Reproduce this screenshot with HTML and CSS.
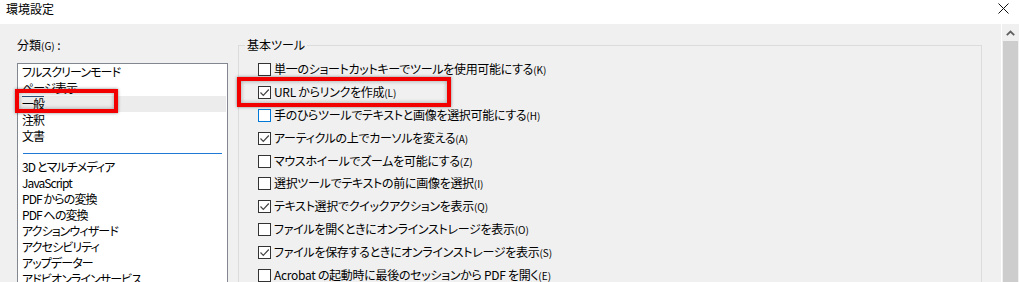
FILE: index.html
```html
<!DOCTYPE html>
<html lang="ja">
<head>
<meta charset="utf-8">
<title>環境設定</title>
<link rel="stylesheet" href="styles.css">
</head>
<body>
<div class="window">
  <div class="titlebar">
    <span class="title">環境設定</span>
    <svg class="close" width="11" height="11" viewBox="0 0 11 11"><path d="M0.5 0.5 L10.5 10.5 M10.5 0.5 L0.5 10.5" stroke="#111" stroke-width="1" fill="none"/></svg>
  </div>
  <div class="body">
    <div class="main">
      <div class="left">
        <div class="cat-label">分類<span class="acc">(G)</span> :</div>
        <div class="listbox">
          <div class="item">フルスクリーンモード</div>
          <div class="item">ページ表示</div>
          <div class="item selected"><span class="focus">一般</span></div>
          <div class="item">注釈</div>
          <div class="item">文書</div>
          <div class="sep"></div>
          <div class="item">3D とマルチメディア</div>
          <div class="item">JavaScript</div>
          <div class="item">PDF からの変換</div>
          <div class="item">PDF への変換</div>
          <div class="item">アクションウィザード</div>
          <div class="item">アクセシビリティ</div>
          <div class="item">アップデーター</div>
          <div class="item">アドビオンラインサービス</div>
        </div>
      </div>
      <div class="right">
        <fieldset class="group">
          <legend>基本ツール</legend>
          <div class="options">
            <div class="opt"><span class="cb"></span><span class="lbl">単一のショートカットキーでツールを使用可能にする<span class="acc">(K)</span></span></div>
            <div class="opt"><span class="cb checked"><svg viewBox="0 0 11 11"><path d="M1.5 5.5 L4.3 8.3 L9.8 2.5" stroke="#444" stroke-width="1.2" fill="none"/></svg></span><span class="lbl">URL からリンクを作成<span class="acc">(L)</span></span></div>
            <div class="opt"><span class="cb hover"></span><span class="lbl">手のひらツールでテキストと画像を選択可能にする<span class="acc">(H)</span></span></div>
            <div class="opt"><span class="cb checked"><svg viewBox="0 0 11 11"><path d="M1.5 5.5 L4.3 8.3 L9.8 2.5" stroke="#444" stroke-width="1.2" fill="none"/></svg></span><span class="lbl">アーティクルの上でカーソルを変える<span class="acc">(A)</span></span></div>
            <div class="opt"><span class="cb"></span><span class="lbl">マウスホイールでズームを可能にする<span class="acc">(Z)</span></span></div>
            <div class="opt"><span class="cb"></span><span class="lbl">選択ツールでテキストの前に画像を選択<span class="acc">(I)</span></span></div>
            <div class="opt"><span class="cb checked"><svg viewBox="0 0 11 11"><path d="M1.5 5.5 L4.3 8.3 L9.8 2.5" stroke="#444" stroke-width="1.2" fill="none"/></svg></span><span class="lbl">テキスト選択でクイックアクションを表示<span class="acc">(Q)</span></span></div>
            <div class="opt"><span class="cb"></span><span class="lbl">ファイルを開くときにオンラインストレージを表示<span class="acc">(O)</span></span></div>
            <div class="opt"><span class="cb checked"><svg viewBox="0 0 11 11"><path d="M1.5 5.5 L4.3 8.3 L9.8 2.5" stroke="#444" stroke-width="1.2" fill="none"/></svg></span><span class="lbl">ファイルを保存するときにオンラインストレージを表示<span class="acc">(S)</span></span></div>
            <div class="opt"><span class="cb"></span><span class="lbl">Acrobat の起動時に最後のセッションから PDF を開く<span class="acc">(E)</span></span></div>
          </div>
        </fieldset>
      </div>
    </div>
    <div class="scrollbar">
      <div class="sb-arrow"><svg width="9" height="6" viewBox="0 0 9 6"><path d="M0.8 5.2 L4.5 1.5 L8.2 5.2" stroke="#606060" stroke-width="1.8" fill="none"/></svg></div>
      <div class="sb-thumb"></div>
    </div>
  </div>
  <div class="mark mark-general"></div>
  <div class="mark mark-url"></div>
</div>
</body>
</html>
```

FILE: styles.css
```css
html, body {
  margin: 0;
  padding: 0;
  height: 282px;
  overflow: hidden;
}
body {
  font-family: "Noto Sans CJK JP", "Noto Sans", sans-serif;
  font-size: 12px;
  color: #000;
  font-feature-settings: "palt";
}
.window {
  position: relative;
  width: 1019px;
  height: 282px;
  background: #f0f0f0;
  display: flex;
  flex-direction: column;
}
.titlebar {
  height: 24px;
  background: #fff;
  display: flex;
  align-items: flex-start;
  justify-content: space-between;
  padding: 0 10px 0 6px;
  flex: none;
}
.title {
  line-height: 18px;
  font-size: 12px;
}
.close {
  margin-top: 3px;
}
.body {
  flex: 1;
  display: flex;
  min-height: 0;
}
.main {
  flex: 1;
  display: flex;
  min-width: 0;
}
.left {
  width: 211px;
  padding: 13px 0 0 17px;
  flex: none;
}
.cat-label {
  line-height: 16px;
  margin-bottom: 9px;
}
.acc {
  font-size: 10px;
  letter-spacing: 0;
}
.listbox {
  background: #fff;
  border: 1px solid #828790;
  height: 260px;
  overflow: hidden;
}
.item {
  height: 16px;
  line-height: 16px;
  padding-left: 4px;
  white-space: nowrap;
  letter-spacing: -0.9px;
}
.item.selected {
  background: #ececec;
  margin: 0 1px;
  padding-left: 3px;
}
.focus {
  display: inline-block;
  box-shadow: inset 0 1px 0 #2b4f7a;
  line-height: 16px;
}
.sep {
  height: 1px;
  background: #1f7ad6;
  margin: 9px 5px 5px 5px;
}
.right {
  flex: 1;
  padding: 13px 19px 0 10px;
  min-width: 0;
}
.group {
  margin: 0;
  border: 1px solid #dcdcdc;
  padding: 0 0 0 6px;
  height: 300px;
  min-width: 0;
}
.group legend {
  padding: 0 2px;
  line-height: 16px;
}
.options {
  padding: 5px 0 0 13px;
}
.opt {
  height: 22.9px;
  display: flex;
  align-items: center;
  white-space: nowrap;
}
.cb {
  width: 13px;
  height: 13px;
  box-sizing: border-box;
  border: 1px solid #333;
  background: #fff;
  margin-right: 3px;
  flex: none;
  display: flex;
  align-items: center;
  justify-content: center;
}
.cb.hover {
  border-color: #0078d7;
}
.cb svg {
  width: 11px;
  height: 11px;
}
.lbl {
  line-height: 16px;
  letter-spacing: -0.3px;
}
.scrollbar {
  width: 17px;
  border-left: 1px solid #fff;
  background: #f0f0f0;
  flex: none;
  display: flex;
  flex-direction: column;
}
.sb-arrow {
  height: 17px;
  display: flex;
  align-items: center;
  justify-content: center;
  flex: none;
}
.sb-thumb {
  flex: 1;
  margin: 0 1px;
  background: #cdcdcd;
}
.mark {
  position: absolute;
  box-sizing: border-box;
  border: 4px solid #f20000;
  box-shadow: 0 0 3px rgba(0, 0, 0, 0.45), inset 0 0 4px rgba(0, 0, 0, 0.35);
}
.mark-general {
  left: 15px;
  top: 89px;
  width: 103px;
  height: 24px;
}
.mark-url {
  left: 237px;
  top: 77px;
  width: 214px;
  height: 30px;
}
```
